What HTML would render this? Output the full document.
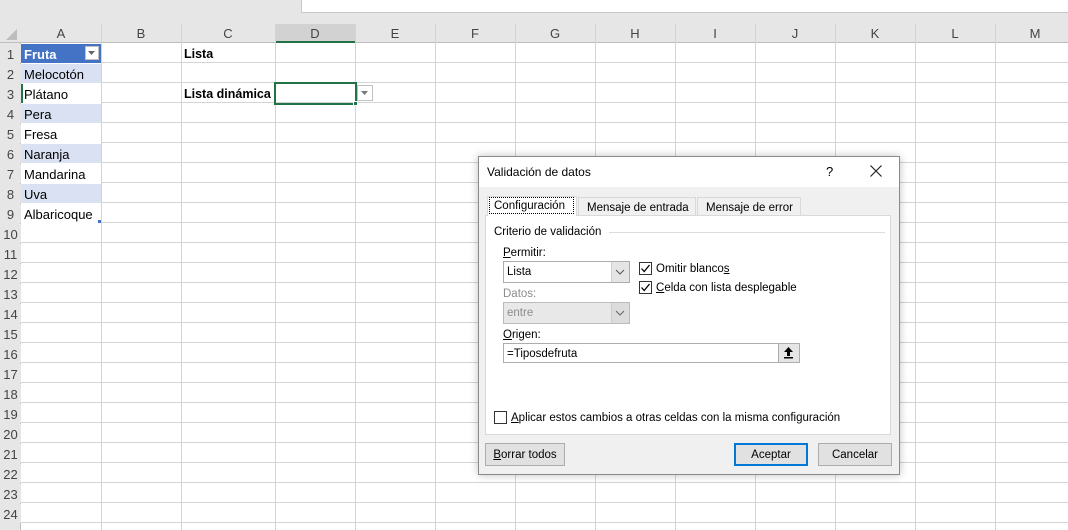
<!DOCTYPE html>
<html><head><meta charset="utf-8"><style>
*{margin:0;padding:0;box-sizing:border-box}
body{width:1068px;height:530px;overflow:hidden;background:#fff;font-family:"Liberation Sans",sans-serif;position:relative}
.a{position:absolute}
.vl{position:absolute;top:24px;width:1px;height:506px;background:#d4d4d4}
.ch{position:absolute;top:24px;height:19px;font-size:13px;color:#444;text-align:center;line-height:20px}
.rh{position:absolute;left:0;width:21px;height:20px;font-size:13px;color:#444;text-align:center;line-height:21px;background:#e6e6e6}
.cell{position:absolute;left:21px;width:80px;height:19px;font-size:13px;line-height:21px;padding-left:3px;color:#000}
.dt{font-family:"Liberation Sans",sans-serif;font-size:11.5px;color:#000}
.btn{position:absolute;height:23px;background:#e1e1e1;border:1px solid #adadad;font-size:11.5px;text-align:center;line-height:23px}
.cb{position:absolute;width:13px;height:13px;border:1px solid #333;background:#fff}
u{text-decoration:underline}
</style></head><body>
<div class="a" style="left:0;top:0;width:1068px;height:24px;background:#e6e6e6"></div>
<div class="a" style="left:301px;top:0;width:767px;height:13px;background:#fff;border-left:1px solid #c8c8c8;border-bottom:1px solid #c8c8c8"></div>
<div class="a" style="left:0;top:24px;width:1068px;height:19px;background:#e6e6e6;border-bottom:1px solid #bdbdbd"></div>
<div class="a" style="left:275px;top:24px;width:80px;height:19px;background:#d2d2d2;border-bottom:2px solid #217346"></div>
<svg class="a" style="left:4px;top:29px" width="14" height="12"><polygon points="13,0 13,11 2,11" fill="#bdbdbd"/></svg>
<div class="a" style="left:21px;top:43px;width:1047px;height:487px;background:repeating-linear-gradient(to bottom,transparent 0,transparent 19px,#d4d4d4 19px,#d4d4d4 20px)"></div>
<div class="a" style="left:0;top:43px;width:21px;height:487px;background:repeating-linear-gradient(to bottom,#e6e6e6 0,#e6e6e6 19px,#d0d0d0 19px,#d0d0d0 20px);border-right:1px solid #bdbdbd"></div>
<div class="vl" style="left:101px"></div><div class="vl" style="left:181px"></div><div class="vl" style="left:275px"></div><div class="vl" style="left:355px"></div><div class="vl" style="left:435px"></div><div class="vl" style="left:515px"></div><div class="vl" style="left:595px"></div><div class="vl" style="left:675px"></div><div class="vl" style="left:755px"></div><div class="vl" style="left:835px"></div><div class="vl" style="left:915px"></div><div class="vl" style="left:995px"></div>
<div class="ch" style="left:21px;width:80px">A</div><div class="ch" style="left:101px;width:80px">B</div><div class="ch" style="left:181px;width:94px">C</div><div class="ch" style="left:275px;width:80px">D</div><div class="ch" style="left:355px;width:80px">E</div><div class="ch" style="left:435px;width:80px">F</div><div class="ch" style="left:515px;width:80px">G</div><div class="ch" style="left:595px;width:80px">H</div><div class="ch" style="left:675px;width:80px">I</div><div class="ch" style="left:755px;width:80px">J</div><div class="ch" style="left:835px;width:80px">K</div><div class="ch" style="left:915px;width:80px">L</div><div class="ch" style="left:995px;width:80px">M</div>
<div class="rh" style="top:44px;height:19px">1</div><div class="rh" style="top:64px;height:19px">2</div><div class="rh" style="top:84px;height:19px">3</div><div class="rh" style="top:104px;height:19px">4</div><div class="rh" style="top:124px;height:19px">5</div><div class="rh" style="top:144px;height:19px">6</div><div class="rh" style="top:164px;height:19px">7</div><div class="rh" style="top:184px;height:19px">8</div><div class="rh" style="top:204px;height:19px">9</div><div class="rh" style="top:224px;height:19px">10</div><div class="rh" style="top:244px;height:19px">11</div><div class="rh" style="top:264px;height:19px">12</div><div class="rh" style="top:284px;height:19px">13</div><div class="rh" style="top:304px;height:19px">14</div><div class="rh" style="top:324px;height:19px">15</div><div class="rh" style="top:344px;height:19px">16</div><div class="rh" style="top:364px;height:19px">17</div><div class="rh" style="top:384px;height:19px">18</div><div class="rh" style="top:404px;height:19px">19</div><div class="rh" style="top:424px;height:19px">20</div><div class="rh" style="top:444px;height:19px">21</div><div class="rh" style="top:464px;height:19px">22</div><div class="rh" style="top:484px;height:19px">23</div><div class="rh" style="top:504px;height:19px">24</div>
<div class="cell" style="top:44px;background:#4472c4;color:#fff;font-weight:bold">Fruta</div>
<div class="a" style="left:85px;top:46px;width:14px;height:14px;background:#fff;border:1px solid #c0c0c0"></div>
<svg class="a" style="left:88px;top:51px" width="8" height="5"><polygon points="0,0 7,0 3.5,4" fill="#666"/></svg>
<div class="cell" style="top:64px;background:#d9e1f2">Melocotón</div>
<div class="cell" style="top:84px;background:#fff">Plátano</div>
<div class="cell" style="top:104px;background:#d9e1f2">Pera</div>
<div class="cell" style="top:124px;background:#fff">Fresa</div>
<div class="cell" style="top:144px;background:#d9e1f2">Naranja</div>
<div class="cell" style="top:164px;background:#fff">Mandarina</div>
<div class="cell" style="top:184px;background:#d9e1f2">Uva</div>
<div class="cell" style="top:204px;background:#fff">Albaricoque</div>
<div class="a" style="left:21px;top:84px;width:2px;height:19px;background:#217346"></div>
<div class="a" style="left:98px;top:220px;width:3px;height:3px;background:#4472c4"></div>
<div class="a" style="left:184px;top:44px;font-size:12.5px;font-weight:bold;line-height:21px">Lista</div>
<div class="a" style="left:184px;top:84px;font-size:12.5px;font-weight:bold;line-height:21px">Lista dinámica</div>
<div class="a" style="left:274px;top:82px;width:83px;height:23px;border:2px solid #217346"></div>
<div class="a" style="left:353px;top:101px;width:5px;height:5px;background:#217346;border:1px solid #fff"></div>
<div class="a" style="left:357px;top:85px;width:16px;height:16px;background:#fff;border:1px solid #c0c0c0"></div>
<svg class="a" style="left:361px;top:91px" width="8" height="5"><polygon points="0,0 7,0 3.5,4" fill="#777"/></svg>

<div class="a" style="left:478px;top:156px;width:422px;height:319px;background:#f0f0f0;border:1px solid #8a8a8a;box-shadow:0 0 8px rgba(0,0,0,0.25)"></div>
<div class="a" style="left:479px;top:157px;width:420px;height:30px;background:#fff"></div>
<div class="a dt" style="left:487px;top:165px;font-size:12px">Validación de datos</div>
<div class="a dt" style="left:826px;top:164px;font-size:13px">?</div>
<svg class="a" style="left:870px;top:165px" width="12" height="12"><path d="M0.5 0.5L11.5 11.5M11.5 0.5L0.5 11.5" stroke="#222" stroke-width="1.2"/></svg>
<div class="a" style="left:485px;top:215px;width:406px;height:220px;background:#fff;border:1px solid #d9d9d9"></div>
<div class="a" style="left:487px;top:196px;width:90px;height:20px;background:#fff;border:1px solid #d9d9d9;border-bottom:none"></div>
<div class="a dt" style="left:489px;top:197px;width:85px;height:17px;border:1px dotted #000;line-height:16px;padding-left:4px">Configuración</div>
<div class="a dt" style="left:578px;top:197px;width:118px;height:18px;border:1px solid #d9d9d9;border-bottom:none;background:#f0f0f0;padding-left:8px;line-height:20px">Mensaje de entrada</div>
<div class="a dt" style="left:697px;top:197px;width:104px;height:18px;border:1px solid #d9d9d9;border-bottom:none;background:#f0f0f0;padding-left:8px;line-height:20px">Mensaje de error</div>
<div class="a dt" style="left:494px;top:226px">Criterio de validación</div>
<div class="a" style="left:609px;top:232px;width:276px;height:1px;background:#dcdcdc"></div>
<div class="a dt" style="left:503px;top:247px"><u>P</u>ermitir:</div>
<div class="a" style="left:503px;top:261px;width:127px;height:22px;border:1px solid #adadad;background:#fff"></div>
<div class="a dt" style="left:507px;top:266px">Lista</div>
<div class="a" style="left:611px;top:262px;width:18px;height:20px;background:#e5e5e5;border-left:1px solid #d0d0d0"></div>
<svg class="a" style="left:615px;top:269px" width="10" height="6"><path d="M1 1L5 5L9 1" stroke="#555" fill="none"/></svg>
<div class="a dt" style="left:503px;top:288px;color:#8d8d8d">Datos:</div>
<div class="a" style="left:503px;top:302px;width:127px;height:22px;border:1px solid #bcbcbc;background:#e8e8e8"></div>
<div class="a dt" style="left:507px;top:307px;color:#8d8d8d">entre</div>
<div class="a" style="left:611px;top:303px;width:18px;height:20px;background:#dcdcdc;border-left:1px solid #ccc"></div>
<svg class="a" style="left:615px;top:310px" width="10" height="6"><path d="M1 1L5 5L9 1" stroke="#666" fill="none"/></svg>
<div class="a dt" style="left:503px;top:329px"><u>O</u>rigen:</div>
<div class="a" style="left:503px;top:343px;width:297px;height:20px;border:1px solid #adadad;background:#fff"></div>
<div class="a dt" style="left:507px;top:348px">=Tiposdefruta</div>
<div class="a" style="left:778px;top:344px;width:21px;height:18px;background:#e5e5e5;border-left:1px solid #adadad"></div>
<svg class="a" style="left:782px;top:346px" width="13" height="13"><path d="M6.5 1L2 6H5V10H8V6H11Z" fill="#000"/><rect x="2" y="11" width="9" height="1.5" fill="#000"/></svg>
<div class="cb" style="left:639px;top:262px"></div>
<svg class="a" style="left:640px;top:263px" width="11" height="11"><path d="M1.5 5.5L4.2 8.5L9.5 2" stroke="#000" stroke-width="1.3" fill="none"/></svg>
<div class="a dt" style="left:656px;top:263px">Omitir blanco<u>s</u></div>
<div class="cb" style="left:639px;top:281px"></div>
<svg class="a" style="left:640px;top:282px" width="11" height="11"><path d="M1.5 5.5L4.2 8.5L9.5 2" stroke="#000" stroke-width="1.3" fill="none"/></svg>
<div class="a dt" style="left:656px;top:282px"><u>C</u>elda con lista desplegable</div>
<div class="cb" style="left:494px;top:411px"></div>
<div class="a dt" style="left:511px;top:412px"><u>A</u>plicar estos cambios a otras celdas con la misma configuración</div>
<div class="btn" style="left:485px;top:443px;width:80px"><u>B</u>orrar todos</div>
<div class="btn" style="left:734px;top:443px;width:74px;border:2px solid #0078d7;line-height:21px">Aceptar</div>
<div class="btn" style="left:818px;top:443px;width:74px">Cancelar</div>
</body></html>
